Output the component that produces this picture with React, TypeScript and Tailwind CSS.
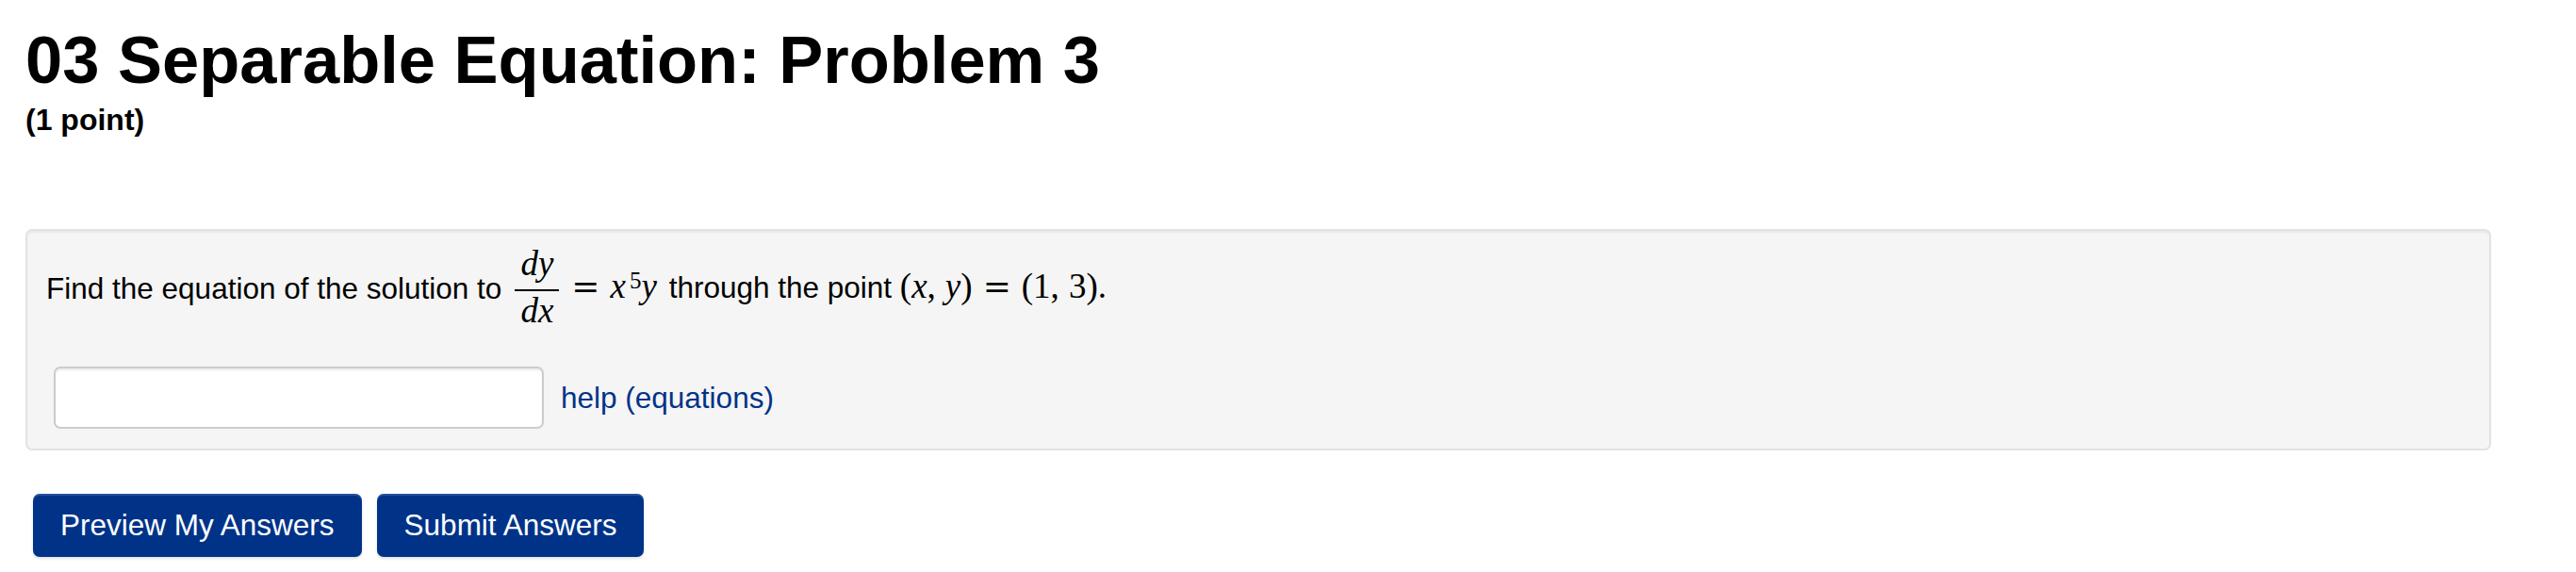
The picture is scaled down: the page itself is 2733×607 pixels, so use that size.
import React from "react";

const mathFont = "font-['Liberation_Serif','DejaVu_Serif',serif]";
const relFont = "font-['DejaVu_Serif','Liberation_Serif',serif]";

function Fraction() {
  return (
    <span className={`ml-[13px] inline-flex flex-col items-center px-[1px] text-[37px] italic ${mathFont}`}>
      <span className="leading-[36px]">dy</span>
      <span className="mt-[9px] h-[2px] w-[47px] bg-black" />
      <span className="mt-[3px] pb-[2px] leading-[36px]">dx</span>
    </span>
  );
}

function Rel({ children }: { children: React.ReactNode }) {
  return <span className={`mx-[11px] text-[36px] ${relFont}`}>{children}</span>;
}

function M({ children, italic, className = "" }: { children: React.ReactNode; italic?: boolean; className?: string }) {
  return <span className={`text-[37px] ${mathFont} ${italic ? "italic" : ""} ${className}`}>{children}</span>;
}

const btn =
  "h-[67px] rounded-[7px] bg-[#003388] px-[29px] text-[31.5px] text-white shadow-[inset_0_2px_0_rgba(255,255,255,0.15),0_2px_3px_rgba(0,0,0,0.12)]";

export default function App() {
  return (
    <div className="min-h-screen bg-white pl-[27px] pr-[90px] pt-[24px] font-['Liberation_Sans',Arial,sans-serif] text-black">
      <h1 className="text-[70.5px] font-bold leading-[80px]">03 Separable Equation: Problem 3</h1>
      <div className="mt-[5px] text-[32px] font-bold leading-[36px]">(1 point)</div>

      <div className="mt-[98px] rounded-[7px] border-2 border-[#e3e3e3] bg-[#f5f5f5] pb-[21px] pl-[20px] pt-[17px] shadow-[inset_0_2px_2px_rgba(0,0,0,0.05)]">
        <div className="flex items-center text-[31.5px] leading-[36px]">
          <span>Find the equation of the solution to</span>
          <Fraction />
          <span className="ml-[1px] whitespace-nowrap leading-[36px]">
            <Rel>=</Rel>
            <M italic>x</M>
            <span className={`relative -top-[10px] ml-[4px] text-[25px] ${mathFont}`}>5</span>
            <M italic>y</M>
            <span className="ml-[4px]"> through the point </span>
            <M>(</M>
            <M italic>x</M>
            <M>,</M>
            <span className="inline-block w-[10px]" />
            <M italic>y</M>
            <M>)</M>
            <Rel>=</Rel>
            <M>(1,</M>
            <span className="inline-block w-[10px]" />
            <M>3).</M>
          </span>
        </div>

        <div className="mt-[39px] flex items-center">
          <input
            type="text"
            className="ml-[8px] h-[66px] w-[520px] rounded-[7px] border-2 border-[#cccccc] bg-white shadow-[inset_0_2px_2px_rgba(0,0,0,0.075)] outline-none"
          />
          <a href="#" className="ml-[18px] text-[31.5px] leading-[36px] text-[#003388]">
            help (equations)
          </a>
        </div>
      </div>

      <div className="ml-[8px] mt-[46px] flex gap-[16px]">
        <button className={btn}>Preview My Answers</button>
        <button className={btn}>Submit Answers</button>
      </div>
    </div>
  );
}
